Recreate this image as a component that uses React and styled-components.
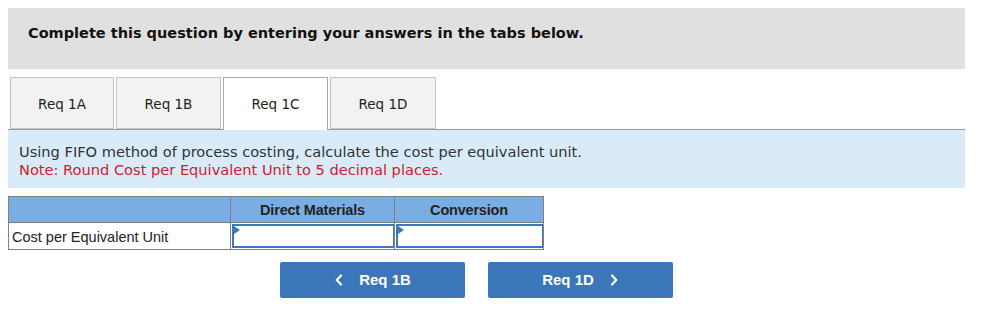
import React from "react";
import styled, { createGlobalStyle } from "styled-components";

const Global = createGlobalStyle`
  html, body { margin: 0; padding: 0; background: #fff; }
  body { margin: 8px; font-family: "DejaVu Sans", Verdana, sans-serif; }
`;

const Page = styled.div`
  width: 957px;
  display: flex;
  flex-direction: column;
`;

const Banner = styled.div`
  background: #e0e0e0;
  height: 61px;
  box-sizing: border-box;
  padding: 17px 0 0 20px;
  font-family: "DejaVu Sans", Verdana, sans-serif;
  font-weight: bold;
  font-size: 14.5px;
  color: #111;
`;

const TabRow = styled.div`
  margin-top: 8px;
  display: flex;
  gap: 2px;
  padding-left: 2px;
  border-bottom: 1px solid #999;
  height: 53px;
  box-sizing: border-box;
`;

const Tab = styled.div`
  width: ${(p) => p.$w}px;
  box-sizing: border-box;
  border: 1px solid ${(p) => (p.$active ? "#a8a8a8" : "#c4c4c4")};
  border-bottom: ${(p) => (p.$active ? "none" : "1px solid #c4c4c4")};
  background: ${(p) => (p.$active ? "#fff" : "#f2f2f2")};
  height: ${(p) => (p.$active ? "53px" : "52px")};
  display: flex;
  align-items: center;
  justify-content: center;
  padding-top: ${(p) => (p.$active ? "0" : "1px")};
  padding-bottom: ${(p) => (p.$active ? "1px" : "0")};
  font-family: "DejaVu Sans", Tahoma, sans-serif;
  font-size: 13.5px;
  color: #222;
`;

const Info = styled.div`
  background: #d9ebf9;
  height: 58px;
  box-sizing: border-box;
  padding: 13px 0 0 11px;
  font-family: "DejaVu Sans", Tahoma, sans-serif;
  font-size: 14.6px;
  line-height: 18px;
  color: #333;
`;

const Note = styled.div`
  color: #d0202c;
`;

const Table = styled.div`
  margin-top: 8px;
  width: 536px;
  display: grid;
  grid-template-columns: 221px 164px 149px;
  grid-template-rows: 26px 27px;
  box-sizing: border-box;
  border: 1px solid #808080;
  border-bottom: none;
  font-family: "Liberation Sans", Arial, sans-serif;
`;

const HeadCell = styled.div`
  background: #7aaee3;
  border-left: ${(p) => (p.$first ? "none" : "1px solid #808080")};
  border-bottom: 1px solid #808080;
  display: flex;
  align-items: center;
  justify-content: center;
  font-weight: bold;
  font-size: 14.5px;
  letter-spacing: -0.2px;
  color: #222;
  box-sizing: border-box;
`;

const LabelCell = styled.div`
  border-bottom: 1px solid #808080;
  display: flex;
  align-items: center;
  padding: 1px 0 0 3px;
  font-size: 14.5px;
  color: #222;
  box-sizing: border-box;
`;

const InputCell = styled.div`
  border-left: 1px solid #808080;
  border-bottom: 1px solid #808080;
  box-sizing: border-box;
  padding: 1px 0 1px 1px;
  display: flex;
`;

const InputBox = styled.div`
  position: relative;
  flex: 1;
  border: 2px solid #3a78c0;
  border-right-width: 1px;
  background: #fff;
  &::before {
    content: "";
    position: absolute;
    top: 0;
    left: 0;
    border-top: 4px solid transparent;
    border-bottom: 4px solid transparent;
    border-left: 6px solid #3a78c0;
  }
`;

const Nav = styled.div`
  margin-top: 12px;
  display: flex;
  gap: 23px;
  padding-left: 272px;
`;

const NavButton = styled.div`
  width: 185px;
  height: 36px;
  background: #3a76b8;
  border-radius: 2px;
  display: flex;
  align-items: center;
  justify-content: center;
  gap: 15px;
  color: #fff;
  font-family: "Liberation Sans", Arial, sans-serif;
  font-weight: bold;
  font-size: 15px;
  padding-bottom: 1px;
  box-sizing: border-box;
`;

const Chevron = ({ dir }) => (
  <svg width="10" height="12" viewBox="0 0 10 12" fill="none">
    <path
      d={dir === "left" ? "M7 1.5 L2.8 6 L7 10.5" : "M3 1.5 L7.2 6 L3 10.5"}
      stroke="#fff"
      strokeWidth="2.2"
      strokeLinecap="round"
      strokeLinejoin="round"
    />
  </svg>
);

export default function App() {
  const tabs = [
    { t: "Req 1A", w: 104 },
    { t: "Req 1B", w: 105 },
    { t: "Req 1C", w: 105 },
    { t: "Req 1D", w: 106 },
  ];
  return (
    <>
      <Global />
      <Page>
        <Banner>Complete this question by entering your answers in the tabs below.</Banner>
        <TabRow>
          {tabs.map(({ t, w }) => (
            <Tab key={t} $w={w} $active={t === "Req 1C"}>
              {t}
            </Tab>
          ))}
        </TabRow>
        <Info>
          <div>Using FIFO method of process costing, calculate the cost per equivalent unit.</div>
          <Note>Note: Round Cost per Equivalent Unit to 5 decimal places.</Note>
        </Info>
        <Table>
          <HeadCell $first />
          <HeadCell>Direct Materials</HeadCell>
          <HeadCell>Conversion</HeadCell>
          <LabelCell>Cost per Equivalent Unit</LabelCell>
          <InputCell>
            <InputBox />
          </InputCell>
          <InputCell>
            <InputBox />
          </InputCell>
        </Table>
        <Nav>
          <NavButton>
            <Chevron dir="left" />
            <span>Req 1B</span>
          </NavButton>
          <NavButton>
            <span>Req 1D</span>
            <Chevron dir="right" />
          </NavButton>
        </Nav>
      </Page>
    </>
  );
}
